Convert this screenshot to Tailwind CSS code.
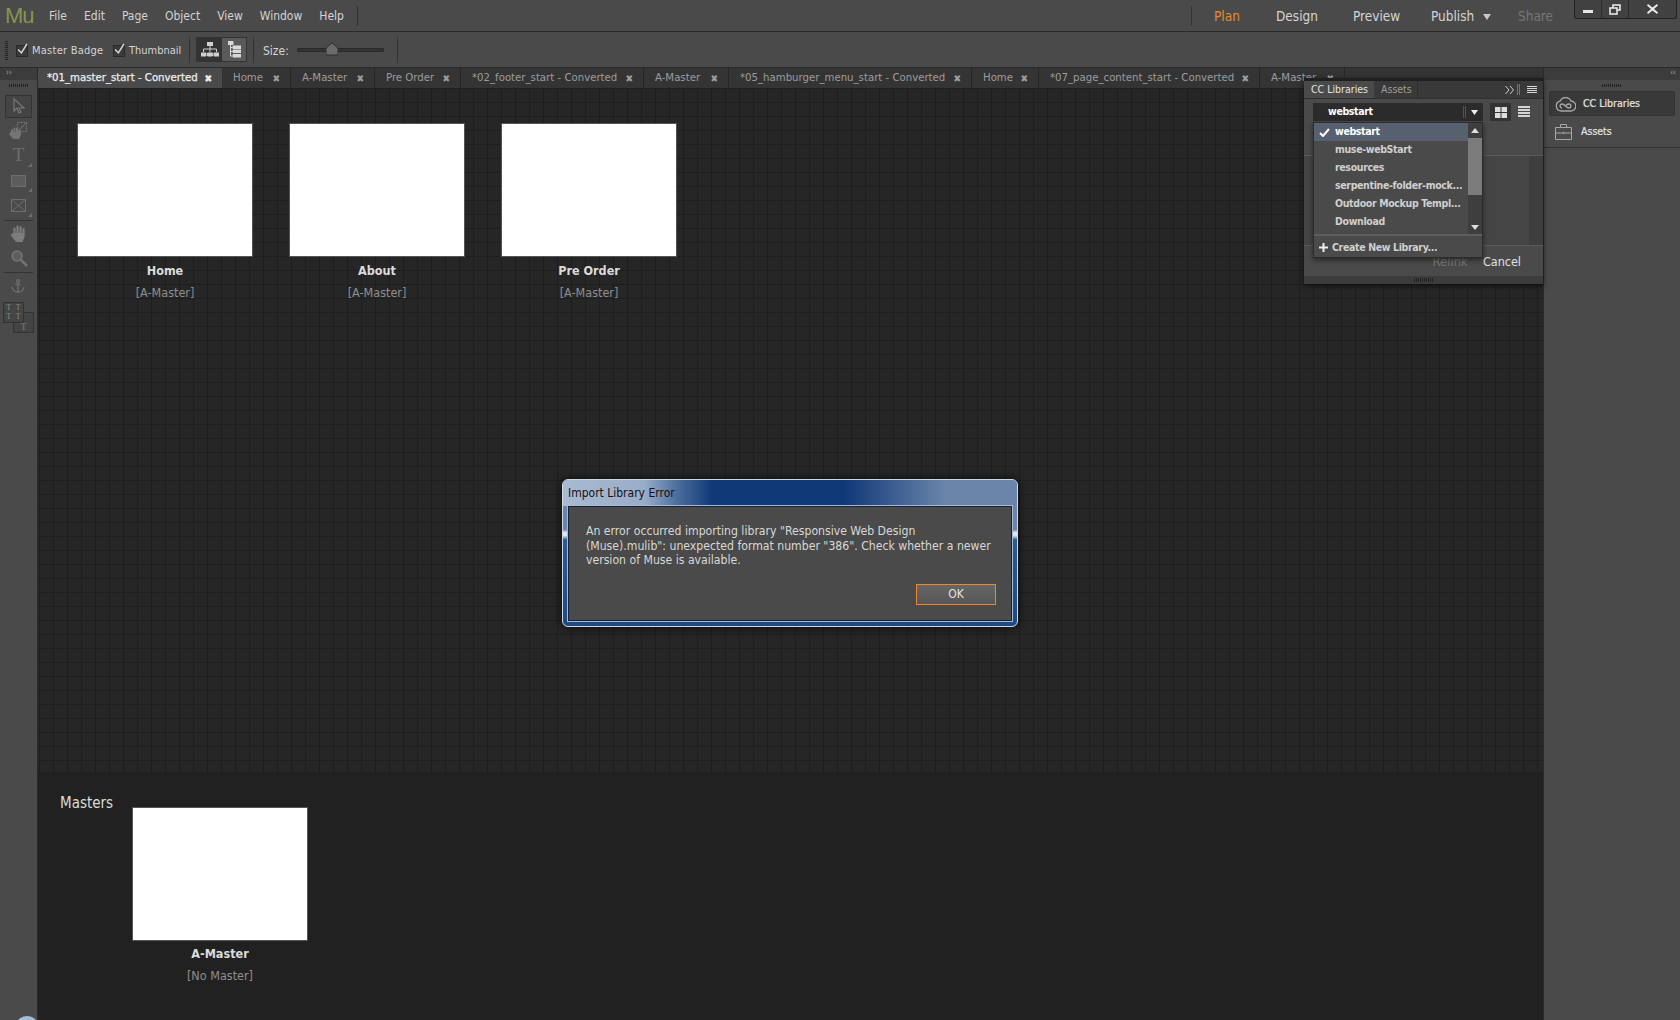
<!DOCTYPE html>
<html lang="en">
<head>
  <meta charset="UTF-8" />
  <title>Adobe Muse – Plan</title>
  <script src="https://cdn.jsdelivr.net/npm/@tailwindcss/browser@4"></script>
</head>
<body class="relative w-[1680px] h-[1020px] overflow-hidden flex flex-col whitespace-nowrap bg-[#212121] text-[12px] text-[#d4d4d4] font-['DejaVu_Sans_Condensed','DejaVu_Sans',sans-serif]">

  <!-- menu bar -->
  <header class="h-[32px] shrink-0 flex bg-[#4a4a4a] border-b border-[#2a2a2a]">
    <div class="w-[44px] pl-[5px] pt-[2px] text-[22px] leading-[28px] text-[#87954f] font-['Liberation_Sans',sans-serif] tracking-[-1px]">Mu</div>
    <nav class="flex items-center gap-[17px] pl-[5px] text-[12px]">
      <span>File</span><span>Edit</span><span>Page</span><span>Object</span><span>View</span><span>Window</span><span>Help</span>
    </nav>
    <div class="w-px h-[20px] mt-[6px] ml-[13px] bg-[#333]"></div>
    <div class="ml-auto flex items-center">
      <div class="w-px h-[20px] bg-[#333] mr-[22px]"></div>
      <nav class="flex items-center pt-[2px] text-[13.5px]">
        <span class="w-[62px] text-[#e88a2a]">Plan</span>
        <span class="w-[77px]">Design</span>
        <span class="w-[78px]">Preview</span>
        <span class="w-[52px]">Publish</span>
        <svg class="w-[8px] h-[6px] mr-[27px]" viewBox="0 0 8 6"><path d="M0 0h8L4 6z" fill="#c8c8c8"/></svg>
        <span class="w-[56px] text-[#767676]">Share</span>
      </nav>
    </div>
    <div class="self-start flex h-[19px] w-[103px] mr-[3px] bg-[#414141] border border-t-0 border-[#222] rounded-b-[3px]">
      <div class="w-[27px] flex items-center justify-center border-r border-[#2c2c2c]"><div class="w-[10px] h-[3px] mt-[4px] bg-[#e6e6e6]"></div></div>
      <div class="w-[27px] flex items-center justify-center border-r border-[#2c2c2c]">
        <svg class="w-[12px] h-[11px]" viewBox="0 0 12 11" fill="none" stroke="#e6e6e6" stroke-width="1.6"><rect x="4" y="1" width="7" height="5"/><rect x="1" y="4" width="7" height="6" fill="#414141"/></svg>
      </div>
      <div class="flex-1 flex items-center justify-center">
        <svg class="w-[11px] h-[10px]" viewBox="0 0 11 10"><path d="M1 0l4.500 3.500L10 0l1 1.500L7 5l4 3.500L10 10 5.500 6.500 1 10 0 8.500 4 5 0 1.500z" fill="#ececec"/></svg>
      </div>
    </div>
  </header>

  <!-- options bar -->
  <div class="h-[36px] shrink-0 flex items-center bg-[#4a4a4a] border-b border-[#2a2a2a] text-[12px]">
    <div class="w-[3px] h-[20px] ml-[5px] bg-[repeating-linear-gradient(0deg,#222_0,#222_1px,transparent_1px,transparent_2px)]"></div>
    <div class="w-[12px] h-[12px] shrink-0 ml-[8px] mt-[2px] flex items-center justify-center bg-[#3a3a3a] border border-[#2a2a2a]">
      <svg class="w-[11px] h-[11px] -mt-[2px] shrink-0 overflow-visible" viewBox="0 0 10 10" fill="none" stroke="#d8d8d8" stroke-width="1.300"><path d="M1 5l3 3 5-8"/></svg>
    </div>
    <span class="ml-[4px] pt-[3px] w-[71px] text-[11px] tracking-[0.25px]">Master Badge</span>
    <div class="w-[12px] h-[12px] shrink-0 ml-[10px] mt-[2px] flex items-center justify-center bg-[#3a3a3a] border border-[#2a2a2a]">
      <svg class="w-[11px] h-[11px] -mt-[2px] shrink-0 overflow-visible" viewBox="0 0 10 10" fill="none" stroke="#d8d8d8" stroke-width="1.300"><path d="M1 5l3 3 5-8"/></svg>
    </div>
    <span class="ml-[4px] pt-[3px] w-[52px] text-[11px]">Thumbnail</span>
    <div class="w-px h-[26px] ml-[8px] bg-[#333]"></div>
    <div class="flex h-[25px] ml-[6px] bg-[#333] border border-[#333]">
      <div class="w-[25px] flex items-center justify-center">
        <svg class="w-[18px] h-[15px]" viewBox="0 0 18 15" fill="none" stroke="#cfcfcf"><rect x="6.500" y=".5" width="5" height="3" fill="#cfcfcf"/><path d="M9 4v3M2.500 10V7h13v3M9 7v3"/><path d="M0 11h5v3H0zM6.500 11h5v3h-5zM13 11h5v3h-5z" fill="#cfcfcf"/></svg>
      </div>
      <div class="w-[24px] flex items-center justify-center bg-[#5a5a5a]">
        <svg class="w-[13px] h-[17px]" viewBox="0 0 13 17" fill="none" stroke="#d8d8d8"><path d="M0 .5h5v3H0z" fill="#d8d8d8"/><path d="M2.500 4v11h2M2.500 6.500h2M2.500 10.500h2"/><path d="M5 5h8v2.500H5zM5 9h8v2.500H5zM5 13.500h8V16H5z" fill="#d8d8d8"/></svg>
      </div>
    </div>
    <div class="w-px h-[26px] ml-[6px] bg-[#333]"></div>
    <span class="ml-[9px] pt-[2px] w-[34px]">Size:</span>
    <div class="relative w-[87px] h-[4px] bg-[#333] border border-[#2a2a2a] rounded-[1px]">
      <svg class="absolute left-[28px] top-[-7px] w-[12px] h-[14px]" viewBox="0 0 12 14"><path d="M0 13V6l6-5 6 5v7z" fill="#6b6b6b" stroke="#2f2f2f"/></svg>
    </div>
    <div class="w-px h-[26px] ml-[13px] bg-[#333]"></div>
  </div>

  <!-- workspace -->
  <div class="flex-1 flex min-h-0">

    <!-- tools -->
    <aside class="relative w-[38px] shrink-0 flex flex-col bg-[#4a4a4a] border-r border-[#2a2a2a]">
      <div class="h-[12px] pl-[6px] text-[8px] leading-[10px] bg-[#3c3c3c] text-[#aaa]">››</div>
      <div class="w-[20px] h-[3px] mx-auto mt-[4px] bg-[repeating-linear-gradient(90deg,#222_0,#222_1px,transparent_1px,transparent_2px)]"></div>
      <div class="w-[27px] h-[23px] ml-[5px] mt-[8px] flex items-center justify-center bg-[#444] border border-[#333]">
        <svg class="w-[12px] h-[17px]" viewBox="0 0 12 17" fill="none" stroke="#777" stroke-width="1.200"><path d="M1 1v12l3-3 2 5 2-1-2-4h5z"/></svg>
      </div>
      <svg class="w-[19px] h-[18px] ml-[9px] mt-[4px]" viewBox="0 0 19 18" fill="none">
        <rect x="8.500" y=".5" width="9" height="9" stroke="#747474" stroke-dasharray="2 1"/>
        <path d="M9 9l8-8" stroke="#747474"/>
        <path d="M3 11V8M5.500 10V6.500M8 10V6.500M10.500 11V8" stroke="#747474" stroke-width="2" stroke-linecap="round"/>
        <path d="M2 10h10v3l-2 4H4l-4-5z" fill="#747474"/>
      </svg>
      <div class="relative h-[25px] mt-[3px] flex items-center justify-center text-[19px] text-[#6e6e6e] font-['Liberation_Serif',serif]">T<div class="absolute right-[5px] bottom-[1px] w-0 h-0 border-l-[4px] border-l-transparent border-b-[4px] border-b-[#6e6e6e]"></div></div>
      <div class="relative h-[25px] flex items-center justify-center"><div class="w-[15px] h-[12px] bg-[#5c5c5c] border border-[#6e6e6e]"></div><div class="absolute right-[5px] bottom-[1px] w-0 h-0 border-l-[4px] border-l-transparent border-b-[4px] border-b-[#6e6e6e]"></div></div>
      <div class="relative h-[25px] flex items-center justify-center">
        <svg class="w-[15px] h-[13px]" viewBox="0 0 15 13" fill="none" stroke="#6e6e6e"><path d="M.5.5h14v12H.5zM.5.5l14 12M14.500.5l-14 12"/></svg>
        <div class="absolute right-[5px] bottom-[1px] w-0 h-0 border-l-[4px] border-l-transparent border-b-[4px] border-b-[#6e6e6e]"></div>
      </div>
      <div class="h-px mx-[4px] mt-[2px] bg-[#333]"></div>
      <svg class="w-[17px] h-[17px] ml-[10px] mt-[4px]" viewBox="0 0 17 17" fill="none">
        <path d="M4.500 9V3.500M7.500 8V1.500M10.500 8V2M13.500 9V4" stroke="#7c7c7c" stroke-width="2.200" stroke-linecap="round"/>
        <path d="M3.500 8h11v4l-2 5H6L.5 10l1-1z" fill="#7c7c7c"/>
      </svg>
      <svg class="w-[17px] h-[17px] ml-[11px] mt-[8px]" viewBox="0 0 17 17" fill="none"><circle cx="6" cy="6" r="5" fill="#5e5e5e" stroke="#747474" stroke-width="1.500"/><path d="M10 10l6 6" stroke="#747474" stroke-width="2.500"/></svg>
      <div class="h-px mx-[4px] mt-[5px] bg-[#333]"></div>
      <svg class="w-[14px] h-[14px] ml-[11px] mt-[6px]" viewBox="0 0 14 14" fill="none" stroke="#6e6e6e" stroke-width="1.300"><circle cx="7" cy="2" r="1.300"/><path d="M7 3.500V13M4.500 5.500h5M1 8c.5 3 3 5 6 5s5.500-2 6-5"/></svg>
      <div class="absolute left-[13px] top-[244px] w-[21px] h-[21px] flex items-end justify-center bg-[#444] border border-[#333] text-[11px] leading-[12px] text-[#777] font-['Liberation_Serif',serif]">T</div>
      <div class="absolute left-[3px] top-[234px] w-[21px] h-[21px] grid grid-cols-2 place-items-center bg-[#444] border border-[#333] text-[8px] leading-[8px] text-[#8a8a8a] font-['Liberation_Serif',serif]"><span>T</span><span>T</span><span>T</span><span>T</span></div>
      <div class="absolute left-[15px] top-[948px] w-[24px] h-[24px] rounded-full bg-[#9fc0d8]"></div>
    </aside>

    <!-- plan area -->
    <main class="flex-1 min-w-0 flex flex-col">
      <div class="h-[20px] shrink-0 flex bg-[#343434] text-[11.3px] text-[#9c9c9c]">
        <div class="w-[184px] flex items-center justify-between pl-[9px] pr-[10px] bg-[#4a4a4a] text-[#ececec] [-webkit-text-stroke:0.25px_#ececec]"><span>*01_master_start - Converted</span><span class="text-[10px]">✖</span></div>
        <div class="w-[69px] flex items-center justify-between pl-[11px] pr-[10px] border-r border-[#262626]"><span>Home</span><span class="text-[10px]">✖</span></div>
        <div class="w-[84px] flex items-center justify-between pl-[11px] pr-[10px] border-r border-[#262626]"><span>A-Master</span><span class="text-[10px]">✖</span></div>
        <div class="w-[86px] flex items-center justify-between pl-[11px] pr-[10px] border-r border-[#262626]"><span>Pre Order</span><span class="text-[10px]">✖</span></div>
        <div class="w-[183px] flex items-center justify-between pl-[11px] pr-[10px] border-r border-[#262626]"><span>*02_footer_start - Converted</span><span class="text-[10px]">✖</span></div>
        <div class="w-[85px] flex items-center justify-between pl-[11px] pr-[10px] border-r border-[#262626]"><span>A-Master</span><span class="text-[10px]">✖</span></div>
        <div class="w-[243px] flex items-center justify-between pl-[11px] pr-[10px] border-r border-[#262626]"><span>*05_hamburger_menu_start - Converted</span><span class="text-[10px]">✖</span></div>
        <div class="w-[67px] flex items-center justify-between pl-[11px] pr-[10px] border-r border-[#262626]"><span>Home</span><span class="text-[10px]">✖</span></div>
        <div class="w-[221px] flex items-center justify-between pl-[11px] pr-[10px] border-r border-[#262626]"><span>*07_page_content_start - Converted</span><span class="text-[10px]">✖</span></div>
        <div class="w-[85px] flex items-center justify-between pl-[11px] pr-[10px] border-r border-[#262626]"><span>A-Master</span><span class="text-[10px]">✖</span></div>
      </div>

      <section class="h-[684px] shrink-0 flex gap-[36px] pl-[39px] pt-[35px] bg-[#262626] bg-[linear-gradient(#1e1e1e_1px,transparent_1px),linear-gradient(90deg,#1e1e1e_1px,transparent_1px)] bg-[size:14px_14px] bg-[position:1px_0px]">
        <div class="w-[176px] flex flex-col items-center">
          <div class="w-full h-[134px] bg-white border border-[#555]"></div>
          <div class="mt-[6px] text-[12.5px] leading-[16px] font-bold text-[#dcdcdc]">Home</div>
          <div class="mt-[6px] text-[12.5px] leading-[16px] text-[#8f8f8f]">[A-Master]</div>
        </div>
        <div class="w-[176px] flex flex-col items-center">
          <div class="w-full h-[134px] bg-white border border-[#555]"></div>
          <div class="mt-[6px] text-[12.5px] leading-[16px] font-bold text-[#dcdcdc]">About</div>
          <div class="mt-[6px] text-[12.5px] leading-[16px] text-[#8f8f8f]">[A-Master]</div>
        </div>
        <div class="w-[176px] flex flex-col items-center">
          <div class="w-full h-[134px] bg-white border border-[#555]"></div>
          <div class="mt-[6px] text-[12.5px] leading-[16px] font-bold text-[#dcdcdc]">Pre Order</div>
          <div class="mt-[6px] text-[12.5px] leading-[16px] text-[#8f8f8f]">[A-Master]</div>
        </div>
      </section>

      <section class="flex-1 flex pl-[22px] pt-[35px]">
        <div class="w-[72px] -mt-[14px] text-[15px] leading-[20px] text-[#dcdcdc]">Masters</div>
        <div class="w-[176px] flex flex-col items-center">
          <div class="w-full h-[134px] bg-white border border-[#555]"></div>
          <div class="mt-[5px] text-[12.5px] leading-[16px] font-bold text-[#dcdcdc]">A-Master</div>
          <div class="mt-[6px] text-[12.5px] leading-[16px] text-[#8f8f8f]">[No Master]</div>
        </div>
      </section>
    </main>

    <!-- docked panel icons -->
    <aside class="w-[137px] shrink-0 flex flex-col bg-[#4a4a4a] border-l border-[#2a2a2a]">
      <div class="h-[12px] pr-[4px] text-right text-[8px] leading-[10px] bg-[#3c3c3c] text-[#aaa]">‹‹</div>
      <div class="w-[20px] h-[3px] mx-auto mt-[4px] bg-[repeating-linear-gradient(90deg,#222_0,#222_1px,transparent_1px,transparent_2px)]"></div>
      <div class="h-[25px] ml-[5px] mr-[5px] mt-[4px] flex items-center gap-[7px] pl-[5px] pt-px bg-[#393939] border border-[#333] rounded-[2px] text-[10.5px] text-[#e4e4e4] [-webkit-text-stroke:0.2px_#e4e4e4]">
        <svg class="w-[21px] h-[15px]" viewBox="0 0 21 15" fill="none" stroke="#a8a8a8" stroke-width="1.300"><path d="M6 14a5 5 0 0 1-1-9.800A6 6 0 0 1 16 4a5 5 0 0 1-.5 10z"/><path d="M7 11c-2.500 0-2.500-4 0-4 3 0 4 4 7 4 2.500 0 2.500-4 0-4-2 0-3 1-4 2"/></svg>
        <span>CC Libraries</span>
      </div>
      <div class="h-[32px] flex items-center gap-[9px] pl-[11px] pt-px text-[10.5px] text-[#e4e4e4] [-webkit-text-stroke:0.2px_#e4e4e4] border-b border-[#333]">
        <svg class="w-[17px] h-[16px]" viewBox="0 0 17 16" fill="none" stroke="#a8a8a8"><path d="M.5 3.500h16v12H.5zM5.500 3.500v-3h6v3M.5 9h16M8.500 8v2"/></svg>
        <span>Assets</span>
      </div>
    </aside>
  </div>

  <!-- floating CC Libraries panel -->
  <div class="absolute left-[1304px] top-[78px] w-[239px] h-[206px] flex flex-col bg-[#4a4a4a] border-t-[3px] border-[#1f1f1f] shadow-[0_2px_6px_rgba(0,0,0,0.6)]">
    <div class="h-[17px] shrink-0 flex items-center bg-[#393939] text-[10.5px]">
      <div class="w-[70px] h-full pl-[7px] flex items-center bg-[#4a4a4a] text-[#e4e4e4]">CC Libraries</div>
      <div class="w-[44px] h-full pl-[7px] flex items-center text-[#9c9c9c] border-r border-[#2f2f2f]">Assets</div>
      <svg class="w-[9px] h-[8px] ml-[87px]" viewBox="0 0 9 8" fill="none" stroke="#cfcfcf"><path d="M.5 0l3.500 4-3.500 4M5 0l3.500 4L5 8"/></svg>
      <div class="w-[3px] h-[11px] ml-[3px] border-x border-[#777]"></div>
      <svg class="w-[10px] h-[8px] ml-[7px]" viewBox="0 0 10 8" stroke="#d8d8d8"><path d="M0 .5h10M0 2.500h10M0 4.500h10M0 6.500h10"/></svg>
    </div>
    <div class="h-[57px] shrink-0 flex items-start pl-[9px] pt-[4px] border-t border-[#2f2f2f]">
      <div class="w-[170px] h-[18px] flex items-center pl-[15px] bg-[#2b2b2b] text-[10.5px] font-bold tracking-[-0.35px] text-white">webstart
        <div class="w-[3px] h-[12px] ml-auto border-x border-[#555]"></div>
        <svg class="w-[7px] h-[5px] mx-[5px]" viewBox="0 0 7 5"><path d="M0 0h7L3.500 5z" fill="#eee"/></svg>
      </div>
      <div class="w-[21px] h-[18px] ml-[7px] flex items-center justify-center bg-[#333]">
        <svg class="w-[12px] h-[11px]" viewBox="0 0 12 11" fill="#ddd"><path d="M0 0h5.500v5H0zM6.500 0H12v5H6.500zM0 6h5.500v5H0zM6.500 6H12v5H6.500z"/></svg>
      </div>
      <svg class="w-[12px] h-[11px] ml-[7px] mt-[3px]" viewBox="0 0 12 11" fill="#d4d4d4"><path d="M0 0h12v2H0zM0 3h12v2H0zM0 6h12v2H0zM0 9h12v2H0z"/></svg>
    </div>
    <div class="h-[90px] shrink-0 flex bg-[#454545] border-t border-[#5a5a5a]">
      <div class="flex-1"></div>
      <div class="w-[14px] bg-[#3e3e3e]"></div>
    </div>
    <div class="h-[31px] shrink-0 flex items-center justify-end pr-[22px] pt-[2px] gap-[15px] border-t border-[#5a5a5a] text-[13px]">
      <span class="text-[#777]">Relink</span><span class="text-[12.5px] text-[#e2e2e2]">Cancel</span>
    </div>
    <div class="h-[8px] shrink-0 flex justify-center bg-[#3c3c3c]"><div class="w-[20px] h-[4px] mt-[2px] bg-[repeating-linear-gradient(90deg,#222_0,#222_1px,transparent_1px,transparent_2px)]"></div></div>

    <!-- library dropdown -->
    <div class="absolute left-[9px] top-[41px] w-[170px] h-[136px] flex flex-col bg-[#4a4a4a] border border-[#2b2b2b] shadow-[0_2px_5px_rgba(0,0,0,0.5)] text-[10.5px] font-bold tracking-[-0.35px] text-[#cfcfcf]">
      <div class="flex h-[113px] border-b-2 border-[#5e5e5e]">
        <ul class="flex-1">
          <li class="h-[18px] flex items-center pl-[5px] bg-[#56606f] text-white">
            <svg class="w-[11px] h-[9px] mr-[5px]" viewBox="0 0 11 9" fill="none" stroke="#fff" stroke-width="2"><path d="M1 5l3 3 6-7"/></svg>webstart
          </li>
          <li class="h-[18px] flex items-center pl-[21px]">muse-webStart</li>
          <li class="h-[18px] flex items-center pl-[21px]">resources</li>
          <li class="h-[18px] flex items-center pl-[21px]">serpentine-folder-mock...</li>
          <li class="h-[18px] flex items-center pl-[21px]">Outdoor Mockup Templ...</li>
          <li class="h-[18px] flex items-center pl-[21px]">Download</li>
        </ul>
        <div class="w-[14px] flex flex-col items-center bg-[#3e3e3e]">
          <svg class="w-[8px] h-[5px] my-[5px]" viewBox="0 0 8 5"><path d="M4 0l4 5H0z" fill="#ddd"/></svg>
          <div class="w-full h-[57px] bg-[#7b7b7b]"></div>
          <svg class="w-[8px] h-[5px] mt-auto mb-[4px]" viewBox="0 0 8 5"><path d="M0 0h8L4 5z" fill="#ddd"/></svg>
        </div>
      </div>
      <div class="flex-1 flex items-center pl-[5px] gap-[4px] pt-[2px]">
        <svg class="w-[9px] h-[9px]" viewBox="0 0 9 9" fill="#eee"><path d="M3.500 0h2v3.500H9v2H5.500V9h-2V5.500H0v-2h3.500z"/></svg>Create New Library...
      </div>
    </div>
  </div>

  <!-- error dialog -->
  <div class="absolute left-[562px] top-[479px] w-[456px] h-[148px] flex flex-col px-[5px] pb-[5px] rounded-[6px] border border-[#cfd8e4] bg-[linear-gradient(180deg,#6a84aa_0,#6a84aa_34%,#dfe6ef_36%,#dfe6ef_38%,#2a5a94_41%,#1c4a85_100%)] shadow-[0_0_10px_rgba(0,0,0,0.8)]">
    <div class="h-[26px] shrink-0 -mx-[5px] px-[5px] flex items-center rounded-t-[5px] bg-[linear-gradient(90deg,#a9bad2_0,#98adc9_18%,#4d6f9f_25%,#0f3877_33%,#0f3877_62%,#6a84aa_84%,#6a84aa_100%)] text-[12px] text-[#1a0f0f]">Import Library Error</div>
    <div class="flex-1 flex flex-col bg-[#4a4a4a] border border-[#14233a] outline outline-1 outline-[#a8bad2] pl-[17px] pr-[15px] pt-[17px]">
      <p class="text-[12.15px] leading-[14.500px] text-[#d8d8d8]">An error occurred importing library "Responsive Web Design<br />(Muse).mulib": unexpected format number "386". Check whether a newer<br />version of Muse is available.</p>
      <button class="self-end w-[80px] h-[21px] mt-[16px] bg-[linear-gradient(180deg,#666,#565656)] border border-[#e88a2a] text-[12px] text-[#e2e2e2]">OK</button>
    </div>
  </div>

</body>
</html>
